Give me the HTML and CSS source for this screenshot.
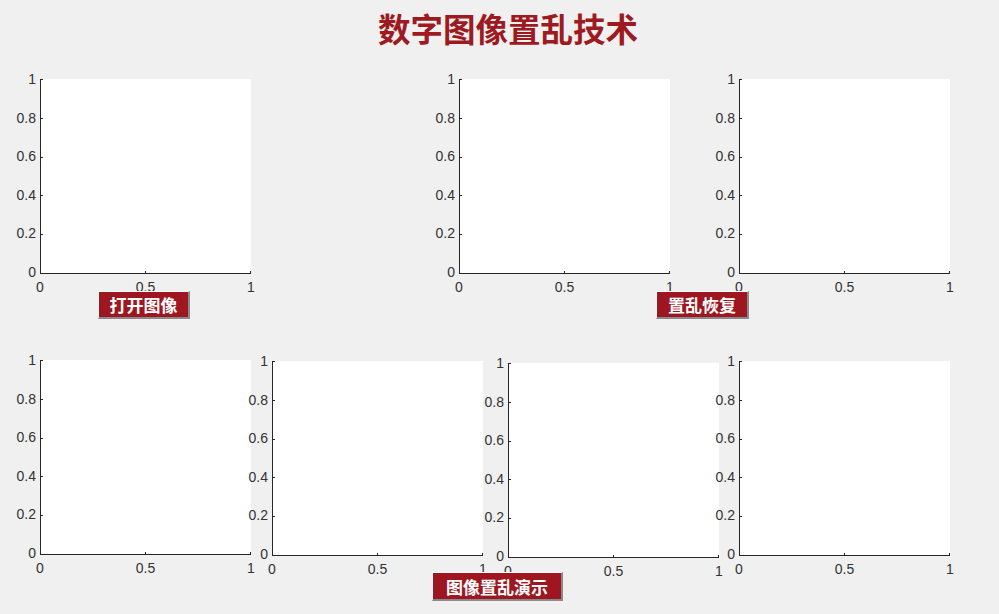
FILE: index.html
```html
<!DOCTYPE html>
<html>
<head>
<meta charset="utf-8">
<link rel="stylesheet" href="styles.css">
</head>
<body>
<div class="fig">
  <h1 class="title">数字图像置乱技术</h1>

  <div class="row row1">
    <div class="ax a1">
      <div class="yl"><span>1</span><span>0.8</span><span>0.6</span><span>0.4</span><span>0.2</span><span>0</span></div>
      <div class="xl"><span>0</span><span>0.5</span><span>1</span></div>
      <div class="yt"><i></i><i></i><i></i><i></i><i></i><i></i></div>
      <div class="xt"><i></i><i></i><i></i></div>
    </div>
    <div class="ax a2">
      <div class="yl"><span>1</span><span>0.8</span><span>0.6</span><span>0.4</span><span>0.2</span><span>0</span></div>
      <div class="xl"><span>0</span><span>0.5</span><span>1</span></div>
      <div class="yt"><i></i><i></i><i></i><i></i><i></i><i></i></div>
      <div class="xt"><i></i><i></i><i></i></div>
    </div>
    <div class="ax a3">
      <div class="yl"><span>1</span><span>0.8</span><span>0.6</span><span>0.4</span><span>0.2</span><span>0</span></div>
      <div class="xl"><span>0</span><span>0.5</span><span>1</span></div>
      <div class="yt"><i></i><i></i><i></i><i></i><i></i><i></i></div>
      <div class="xt"><i></i><i></i><i></i></div>
    </div>
  </div>

  <div class="row btnrow1">
    <button class="btn b-open">打开图像</button>
    <button class="btn b-restore">置乱恢复</button>
  </div>

  <div class="row row2">
    <div class="ax c1">
      <div class="yl"><span>1</span><span>0.8</span><span>0.6</span><span>0.4</span><span>0.2</span><span>0</span></div>
      <div class="xl"><span>0</span><span>0.5</span><span>1</span></div>
      <div class="yt"><i></i><i></i><i></i><i></i><i></i><i></i></div>
      <div class="xt"><i></i><i></i><i></i></div>
    </div>
    <div class="ax c2">
      <div class="yl"><span>1</span><span>0.8</span><span>0.6</span><span>0.4</span><span>0.2</span><span>0</span></div>
      <div class="xl"><span>0</span><span>0.5</span><span>1</span></div>
      <div class="yt"><i></i><i></i><i></i><i></i><i></i><i></i></div>
      <div class="xt"><i></i><i></i><i></i></div>
    </div>
    <div class="ax c3">
      <div class="yl"><span>1</span><span>0.8</span><span>0.6</span><span>0.4</span><span>0.2</span><span>0</span></div>
      <div class="xl"><span>0</span><span>0.5</span><span>1</span></div>
      <div class="yt"><i></i><i></i><i></i><i></i><i></i><i></i></div>
      <div class="xt"><i></i><i></i><i></i></div>
    </div>
    <div class="ax c4">
      <div class="yl"><span>1</span><span>0.8</span><span>0.6</span><span>0.4</span><span>0.2</span><span>0</span></div>
      <div class="xl"><span>0</span><span>0.5</span><span>1</span></div>
      <div class="yt"><i></i><i></i><i></i><i></i><i></i><i></i></div>
      <div class="xt"><i></i><i></i><i></i></div>
    </div>
  </div>

  <div class="row btnrow2">
    <button class="btn b-demo">图像置乱演示</button>
  </div>
</div>
</body>
</html>
```

FILE: styles.css
```css
html, body {
  margin: 0;
  padding: 0;
}
body {
  background: #f0f0f0;
  width: 999px;
  height: 614px;
  overflow: hidden;
  font-family: "Liberation Sans", Arial, sans-serif;
}
.fig {
  padding-top: 8px;
}
.title {
  margin: 0;
  height: 40px;
  line-height: 40px;
  padding-left: 17px;
  text-align: center;
  font-family: "Noto Sans CJK SC", sans-serif;
  font-weight: 700;
  font-size: 32.5px;
  color: #9e1a21;
}
.row {
  display: flex;
  align-items: flex-start;
}
.row1 { margin-top: 31px; }
.btnrow1 { margin-top: 17px; }
.row2 { margin-top: 41px; }
.btnrow2 { margin-top: 14px; }

.ax {
  position: relative;
  box-sizing: border-box;
  width: 211px;
  height: 195px;
  background: #fff;
  border-left: 1px solid #262626;
  border-bottom: 1px solid #262626;
  flex: none;
}
.a1 { margin-left: 40px; }
.a2 { margin-left: 208px; }
.a3 { margin-left: 69px; }
.c1 { margin-left: 40px; }
.c2 { margin-left: 21px; margin-top: 1px; }
.c3 { margin-left: 25px; margin-top: 3px; }
.c4 { margin-left: 20px; margin-top: 1px; }

.yl {
  position: absolute;
  right: calc(100% + 5px);
  top: -8px;
  bottom: -7px;
  display: flex;
  flex-direction: column;
  justify-content: space-between;
  align-items: flex-end;
}
.yl span, .xl span {
  font-size: 14px;
  line-height: 16px;
  color: #333333;
  white-space: nowrap;
}
.xl {
  position: absolute;
  top: calc(100% + 6px);
  left: -16px;
  right: -15px;
  display: flex;
  justify-content: space-between;
}
.xl span {
  width: 30px;
  text-align: center;
}
.yt {
  position: absolute;
  left: 0;
  top: 0;
  bottom: -1px;
  display: flex;
  flex-direction: column;
  justify-content: space-between;
}
.yt i {
  display: block;
  width: 2px;
  height: 1px;
  background: #262626;
}
.xt {
  position: absolute;
  left: -1px;
  right: 0;
  bottom: 0;
  height: 2px;
  display: flex;
  justify-content: space-between;
}
.xt i {
  display: block;
  width: 1px;
  height: 2px;
  background: #262626;
}

.btn {
  box-sizing: border-box;
  position: relative;
  z-index: 2;
  padding: 0;
  margin: 0;
  background: #9d1620;
  color: #fff;
  font-family: "Noto Sans CJK SC", sans-serif;
  font-weight: 700;
  font-size: 17px;
  line-height: 1;
  border-style: solid;
  border-width: 1px 2px 2px 1px;
  border-color: #ffffff #8a8a8a #8a8a8a #ffffff;
  flex: none;
}
.b-open { margin-left: 98px; width: 92px; height: 28px; }
.b-restore { margin-left: 466px; width: 93px; height: 28px; }
.b-demo { margin-left: 432px; width: 131px; height: 29px; }
```
